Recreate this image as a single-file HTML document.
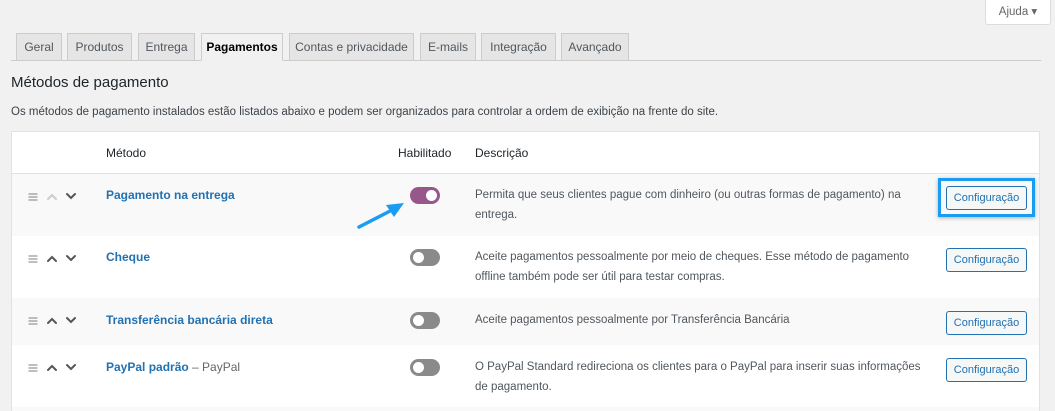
<!DOCTYPE html>
<html><head><meta charset="utf-8"><style>
*{box-sizing:border-box;margin:0;padding:0}
body{width:1055px;height:411px;background:#f1f1f1;font-family:"Liberation Sans",sans-serif;color:#3c434a;position:relative;overflow:hidden;font-size:12px}
.a{position:absolute;white-space:nowrap}
.tab{position:absolute;top:33px;height:27px;border:1px solid #ccc;border-bottom:none;background:#e5e5e5;font-size:12px;color:#50575e;text-align:center;line-height:26px;white-space:nowrap}
.tab.on{background:#f1f1f1;color:#000;height:28px;border-bottom:1px solid #f1f1f1;font-weight:bold}
.row{position:absolute;left:11px;width:1029px;border-left:1px solid #e2e2e2;border-right:1px solid #e2e2e2}
.name{font-weight:bold;color:#2271b1;font-size:12px}
.desc{font-size:11.5px;color:#50575e;line-height:20px;white-space:normal;width:460px}
.btn{position:absolute;left:946px;width:81px;height:24px;border:1px solid #2271b1;border-radius:3px;background:#f6f7f7;color:#2271b1;font-size:11px;text-align:center;line-height:22px}
.tg{position:absolute;left:410px;width:30px;height:17px;border-radius:9px;background:#8a8a8a}
.tg::after{content:"";position:absolute;left:3px;top:3px;width:11px;height:11px;border-radius:50%;background:#fff}
.tg.on{background:#96588a}.tg.on::after{left:16px}
</style></head><body>
<div class="a" style="left:985px;top:0;width:66px;height:25px;background:#fff;border:1px solid #ddd;border-top:none;border-radius:0 0 3px 3px;font-size:11.5px;color:#666;line-height:24px;text-align:center">Ajuda ▾</div>
<div class="a" style="left:11px;top:60px;width:1030px;height:1px;background:#ccc"></div>
<div class="tab" style="left:16px;width:46px">Geral</div>
<div class="tab" style="left:67px;width:65px">Produtos</div>
<div class="tab" style="left:138px;width:57px">Entrega</div>
<div class="tab on" style="left:201px;width:82px">Pagamentos</div>
<div class="tab" style="left:289px;width:125px">Contas e privacidade</div>
<div class="tab" style="left:420px;width:56px">E-mails</div>
<div class="tab" style="left:481px;width:75px">Integração</div>
<div class="tab" style="left:561px;width:68px">Avançado</div>
<div class="a" style="left:11px;top:74px;font-size:15px;color:#1d2327">Métodos de pagamento</div>
<div class="a" style="left:11px;top:106px;font-size:11.5px;color:#3c434a">Os métodos de pagamento instalados estão listados abaixo e podem ser organizados para controlar a ordem de exibição na frente do site.</div>

<div class="row" style="top:131px;height:43px;background:#fff;border-top:1px solid #e2e2e2;border-bottom:1px solid #e2e2e2"></div>
<div class="a" style="left:106px;top:146px;font-size:12px;color:#1d2327">Método</div>
<div class="a" style="left:398px;top:146px;font-size:12px;color:#1d2327">Habilitado</div>
<div class="a" style="left:475px;top:146px;font-size:12px;color:#1d2327">Descrição</div>

<div class="row" style="top:174px;height:62px;background:#f9f9f9"></div>
<div class="row" style="top:236px;height:62px;background:#fff"></div>
<div class="row" style="top:298px;height:47px;background:#f9f9f9"></div>
<div class="row" style="top:345px;height:62px;background:#fff"></div>
<div class="row" style="top:407px;height:4px;background:#f9f9f9"></div>

<svg class="a" style="left:28px;top:188px" width="52" height="220" viewBox="0 0 52 220">
<g fill="none" stroke-width="2" stroke-linecap="round">
<g stroke="#999" stroke-width="1.3"><path d="M1 6h8M1 9h8M1 12h8"/><path d="M1 68h8M1 71h8M1 74h8"/><path d="M1 130h8M1 133h8M1 136h8"/><path d="M1 177h8M1 180h8M1 183h8"/></g>
<path d="M20 11l4-4 4 4" stroke="#ccc"/><path d="M39 6l4 4 4-4" stroke="#555"/>
<path d="M20 73l4-4 4 4" stroke="#555"/><path d="M39 68l4 4 4-4" stroke="#555"/>
<path d="M20 135l4-4 4 4" stroke="#555"/><path d="M39 130l4 4 4-4" stroke="#555"/>
<path d="M20 182l4-4 4 4" stroke="#555"/><path d="M39 177l4 4 4-4" stroke="#555"/>
</g></svg>

<div class="a name" style="left:106px;top:188px">Pagamento na entrega</div>
<div class="a name" style="left:106px;top:250px">Cheque</div>
<div class="a name" style="left:106px;top:313px">Transferência bancária direta</div>
<div class="a name" style="left:106px;top:360px">PayPal padrão <span style="font-weight:normal;color:#666">– PayPal</span></div>

<div class="tg on" style="top:187px"></div>
<div class="tg" style="top:249px"></div>
<div class="tg" style="top:312px"></div>
<div class="tg" style="top:359px"></div>

<div class="a desc" style="left:475px;top:185px">Permita que seus clientes pague com dinheiro (ou outras formas de pagamento) na entrega.</div>
<div class="a desc" style="left:475px;top:247px">Aceite pagamentos pessoalmente por meio de cheques. Esse método de pagamento offline também pode ser útil para testar compras.</div>
<div class="a desc" style="left:475px;top:310px">Aceite pagamentos pessoalmente por Transferência Bancária</div>
<div class="a desc" style="left:475px;top:357px">O PayPal Standard redireciona os clientes para o PayPal para inserir suas informações de pagamento.</div>

<div class="btn" style="top:186px">Configuração</div>
<div class="btn" style="top:248px">Configuração</div>
<div class="btn" style="top:311px">Configuração</div>
<div class="btn" style="top:358px">Configuração</div>
<div class="a" style="left:938px;top:178px;width:97px;height:39px;border:3px solid #1a9cf0;box-shadow:0 1px 4px rgba(0,0,0,.3)"></div>

<svg class="a" style="left:350px;top:195px" width="60" height="40"><path d="M9 32L44 14" stroke="#1a9cf0" stroke-width="3.5" stroke-linecap="round"/><path d="M54 8L36 10L44 22Z" fill="#1a9cf0"/></svg>
</body></html>
